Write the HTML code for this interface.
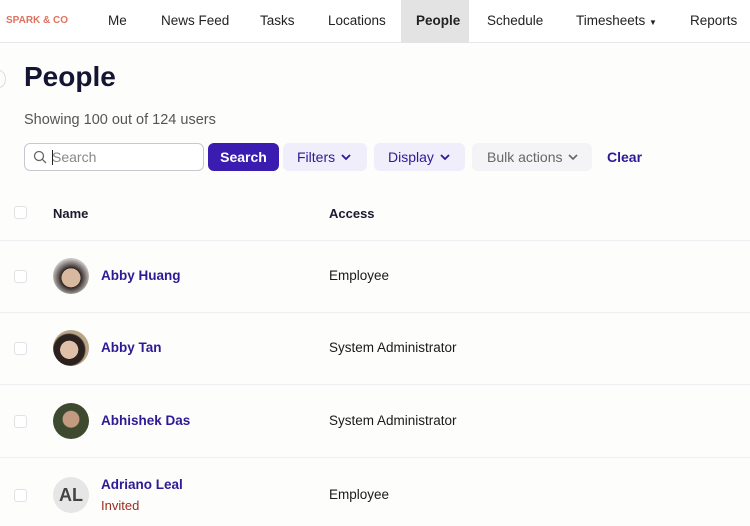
<!DOCTYPE html>
<html><head><style>
*{margin:0;padding:0;box-sizing:border-box}
body{width:750px;height:526px;overflow:hidden;background:#fdfdfc;font-family:"Liberation Sans",sans-serif;position:relative;color:#1a1a2e}
.a{position:absolute;white-space:nowrap}
.nav{position:absolute;left:0;top:0;width:750px;height:43px;border-bottom:1px solid #e8e8ec;background:#fff}
.nav span{position:absolute;top:13px;font-size:13.5px;color:#222}
.btn{position:absolute;top:143px;height:28px;border-radius:6px;font-size:14px;line-height:28px}
.cb{position:absolute;left:14px;width:13px;height:13px;border:1px solid #e2e2e6;border-radius:3px;background:#fff}
.line{position:absolute;left:0;width:750px;height:1px;background:#efeff3}
.av{position:absolute;left:53px;width:36px;height:36px;border-radius:50%}
.nm{position:absolute;left:101px;font-size:13.5px;font-weight:bold;color:#2d1a95}
.ac{position:absolute;left:329px;font-size:13.5px;color:#1a1a1a}
.chev{display:inline-block;vertical-align:middle;margin-left:6px;margin-top:-2px}
</style></head><body>
<div class="nav">
<span style="left:6px;top:15px;font-size:10px;font-weight:bold;color:#e0735f">SPARK &amp; CO</span>
<span style="left:108px">Me</span>
<span style="left:161px">News Feed</span>
<span style="left:260px">Tasks</span>
<span style="left:328px">Locations</span>
<div style="position:absolute;left:401px;top:0;width:68px;height:43px;background:#e3e3e3"></div>
<span style="left:416px;font-weight:bold">People</span>
<span style="left:487px">Schedule</span>
<span style="left:576px">Timesheets <span style="position:static;font-size:8px">▼</span></span>
<span style="left:690px">Reports</span>
</div>
<div class="a" style="left:-8px;top:70px;width:14px;height:18px;border:1px solid #ddd;border-radius:50%"></div>
<div class="a" style="left:24px;top:61px;font-size:28px;font-weight:bold;color:#141433">People</div>
<div class="a" style="left:24px;top:112px;font-size:14.5px;color:#555">Showing 100 out of 124 users</div>
<div class="btn" style="left:24px;width:180px;border:1px solid #c8c8d0;background:#fff">
<svg style="position:absolute;left:8px;top:6px" width="14" height="14" viewBox="0 0 14 14"><circle cx="6" cy="6" r="4.5" fill="none" stroke="#666" stroke-width="1.3"/><path d="M9.3 9.3L13 13" stroke="#666" stroke-width="1.3"/></svg>
<span style="position:absolute;left:27px;top:0;color:#888;line-height:26px">Search</span>
<div style="position:absolute;left:27px;top:6px;width:1px;height:15px;background:#222"></div></div>
<div class="btn" style="left:208px;width:71px;background:#3a1db0;color:#fff;font-weight:bold;text-align:center">Search</div>
<div class="btn" style="left:283px;width:84px;background:#efeefa;color:#2d1a95;padding-left:14px">Filters<svg class="chev" width="10" height="6" viewBox="0 0 10 6"><path d="M1 1l4 4 4-4" fill="none" stroke="#2d1a95" stroke-width="1.8"/></svg></div>
<div class="btn" style="left:374px;width:91px;background:#efeefa;color:#2d1a95;padding-left:14px">Display<svg class="chev" width="10" height="6" viewBox="0 0 10 6"><path d="M1 1l4 4 4-4" fill="none" stroke="#2d1a95" stroke-width="1.8"/></svg></div>
<div class="btn" style="left:472px;width:120px;background:#f4f4f7;color:#666;padding-left:15px">Bulk actions<svg class="chev" width="10" height="6" viewBox="0 0 10 6"><path d="M1 1l4 4 4-4" fill="none" stroke="#666" stroke-width="1.6"/></svg></div>
<div class="btn" style="left:607px;color:#2d1a95;font-weight:bold">Clear</div>
<div class="cb" style="top:206px"></div>
<div class="a" style="left:53px;top:206px;font-size:13px;font-weight:bold">Name</div>
<div class="a" style="left:329px;top:206px;font-size:13px;font-weight:bold">Access</div>
<div class="line" style="top:240px"></div>
<div class="cb" style="top:270px"></div>
<div class="av" style="top:258px;background:radial-gradient(circle at 50% 55%,#d9b8a0 0 35%,#2b2220 36%,#c9c5c2 70%)"></div>
<div class="nm" style="top:268px">Abby Huang</div><div class="ac" style="top:268px">Employee</div>
<div class="line" style="top:312px"></div>
<div class="cb" style="top:342px"></div>
<div class="av" style="top:330px;background:radial-gradient(circle at 45% 55%,#e0bfa8 0 32%,#2b2220 33% 55%,#b9a488 60%)"></div>
<div class="nm" style="top:340px">Abby Tan</div><div class="ac" style="top:340px">System Administrator</div>
<div class="line" style="top:384px"></div>
<div class="cb" style="top:415px"></div>
<div class="av" style="top:403px;background:radial-gradient(circle at 50% 45%,#c49a80 0 30%,#3d4a30 33%)"></div>
<div class="nm" style="top:413px">Abhishek Das</div><div class="ac" style="top:413px">System Administrator</div>
<div class="line" style="top:457px"></div>
<div class="cb" style="top:489px"></div>
<div class="av" style="top:477px;background:#e6e6e6;color:#444;font-weight:bold;font-size:18px;text-align:center;line-height:36px">AL</div>
<div class="nm" style="top:477px">Adriano Leal</div>
<div class="a" style="left:101px;top:498px;font-size:13px;color:#9b2c22">Invited</div>
<div class="ac" style="top:487px">Employee</div>
</body></html>
